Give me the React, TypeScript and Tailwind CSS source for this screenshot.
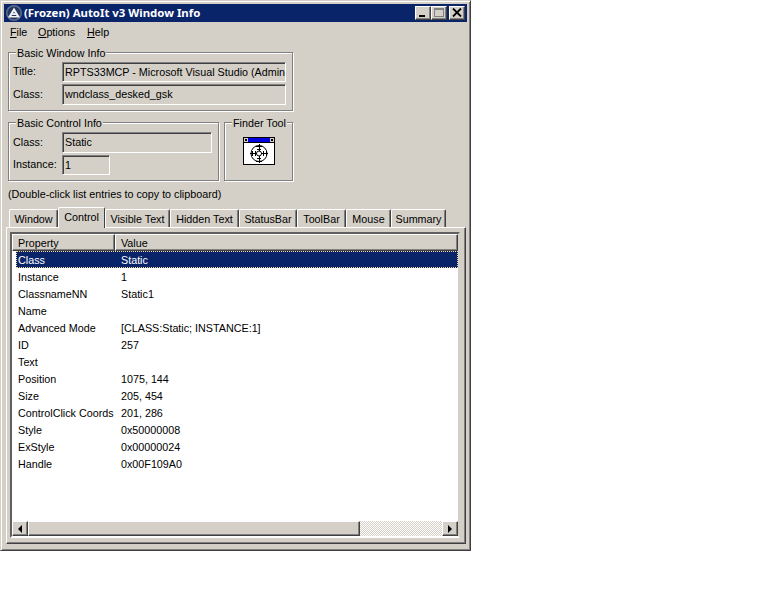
import React from "react";

const rows: [string, string][] = [
  ["Class", "Static"],
  ["Instance", "1"],
  ["ClassnameNN", "Static1"],
  ["Name", ""],
  ["Advanced Mode", "[CLASS:Static; INSTANCE:1]"],
  ["ID", "257"],
  ["Text", ""],
  ["Position", "1075, 144"],
  ["Size", "205, 454"],
  ["ControlClick Coords", "201, 286"],
  ["Style", "0x50000008"],
  ["ExStyle", "0x00000024"],
  ["Handle", "0x00F109A0"],
];

const tabs: [string, string][] = [
  ["Window", "w-[49px] ml-[3px]"],
  ["Control", "w-[47px]"],
  ["Visible Text", "w-[65px]"],
  ["Hidden Text", "w-[69px]"],
  ["StatusBar", "w-[58px]"],
  ["ToolBar", "w-[49px]"],
  ["Mouse", "w-[45px]"],
  ["Summary", "w-[55px]"],
];

const raised =
  "border border-t-white border-l-white border-r-[#404040] border-b-[#404040] shadow-[inset_-1px_-1px_0_#808080]";

function Field({ text, className }: { text: string; className: string }) {
  return (
    <div
      className={`flex items-center overflow-hidden whitespace-nowrap border border-t-[#808080] border-l-[#808080] border-r-white border-b-white pb-px pl-[2px] shadow-[inset_1px_1px_0_#404040] ${className}`}
    >
      {text}
    </div>
  );
}

function Group({ title, className, children }: { title: string; className: string; children?: React.ReactNode }) {
  return (
    <div
      className={`relative shrink-0 border border-[#808080] shadow-[inset_1px_1px_0_#fff,1px_1px_0_#fff] ${className}`}
    >
      <span className="absolute left-[7px] top-[-7px] bg-[#d4d0c8] px-px leading-[14px]">{title}</span>
      {children}
    </div>
  );
}

function Row({ label, children }: { label: string; children: React.ReactNode }) {
  return (
    <div className="flex items-center">
      <div className="w-[49px] pb-[2px]">{label}</div>
      {children}
    </div>
  );
}

function Logo() {
  return (
    <svg width="18" height="18" viewBox="0 0 18 18" className="shrink-0">
      <circle cx="9" cy="9" r="8" fill="#5d6f8e" />
      <circle cx="9" cy="9" r="6.5" fill="#26365c" />
      <path d="M9 3.5 L15 13.5 H3 Z" fill="#f2f4f8" />
      <path d="M9 7.5 L11.6 12 H6.4 Z" fill="#26365c" />
      <path d="M6.5 10.5 L9 8.8 L11.5 10.5 L10.5 11 H7.5 Z" fill="#f2f4f8" />
    </svg>
  );
}

function FinderIcon() {
  return (
    <svg width="32" height="28" viewBox="0 0 32 28" shapeRendering="crispEdges">
      <rect x="0.5" y="0.5" width="31" height="27" fill="#fff" stroke="#000" />
      <rect x="1" y="1" width="30" height="4" fill="#0000e0" />
      <rect x="1" y="1" width="4" height="4" fill="#d4d0c8" />
      <rect x="27" y="1" width="4" height="4" fill="#d4d0c8" />
      <rect x="2" y="2" width="2" height="2" fill="#000" />
      <rect x="28" y="2" width="2" height="2" fill="#000" />
      <rect x="0" y="5" width="32" height="1" fill="#000" />
      <circle cx="16" cy="16.5" r="8" fill="none" stroke="#000" strokeWidth="1" shapeRendering="auto" />
      <circle cx="16" cy="16.5" r="2.5" fill="none" stroke="#000" strokeWidth="1" shapeRendering="auto" />
      <path d="M16 7v7M16 19v7M7 16.5h7M18 16.5h7" stroke="#000" fill="none" />
      <path d="M13 9h6M13 24h6M9 14v5M23 14v5M14 12h4M14 21h4M12 14v5M20 14v5" stroke="#000" fill="none" />
    </svg>
  );
}

export default function App() {
  return (
    <div className="h-[614px] w-[768px] bg-white font-['Liberation_Sans',Arial,sans-serif] text-[10.75px] leading-[14px] text-black">
      <div className="h-[551px] w-[471px] border border-t-[#d4d0c8] border-l-[#d4d0c8] border-r-[#404040] border-b-[#404040] bg-[#d4d0c8] shadow-[inset_1px_1px_0_#fff,inset_-1px_-1px_0_#808080] p-[3px]">
        <div className="flex h-[18px] items-center bg-[#0a246a] pl-[1px] pr-[2px]">
          <Logo />
          <span className="ml-px whitespace-nowrap font-['Noto_Sans',sans-serif] text-[11.4px] font-bold text-white">(Frozen) AutoIt v3 Window Info</span>
          <div className="ml-auto flex items-center">
            <button className={`relative h-[14px] w-[16px] bg-[#d4d0c8] ${raised}`}>
              <span className="absolute bottom-[2px] left-[3px] h-[2px] w-[6px] bg-black" />
            </button>
            <button className={`flex h-[14px] w-[16px] items-center justify-center bg-[#d4d0c8] ${raised}`}>
              <span className="mr-px mb-px h-[9px] w-[10px] border border-t-2 border-[#808080]" />
            </button>
            <button className={`ml-[2px] flex h-[14px] w-[16px] items-center justify-center bg-[#d4d0c8] ${raised}`}>
              <svg width="10" height="9" viewBox="0 0 10 9" className="mr-px mb-px">
                <path d="M1 0.5 L9 8.5 M9 0.5 L1 8.5" stroke="#000" strokeWidth="1.8" fill="none" />
              </svg>
            </button>
          </div>
        </div>

        <div className="flex h-[20px] items-center whitespace-nowrap pb-px">
          <span className="ml-[6px] w-[28px]"><u>F</u>ile</span>
          <span className="w-[49px]"><u>O</u>ptions</span>
          <span><u>H</u>elp</span>
        </div>

        <Group title="Basic Window Info" className="ml-[4px] mt-[10px] h-[59px] w-[285px] pl-[4px] pt-[9px]">
          <div className="flex flex-col gap-[2px]">
            <Row label="Title:">
              <Field text="RPTS33MCP - Microsoft Visual Studio (Admini" className="h-[20px] w-[224px]" />
            </Row>
            <Row label="Class:">
              <Field text="wndclass_desked_gsk" className="h-[21px] w-[224px]" />
            </Row>
          </div>
        </Group>

        <div className="ml-[4px] mt-[11px] flex gap-[5px]">
          <Group title="Basic Control Info" className="h-[59px] w-[211px] pl-[4px] pt-[9px]">
            <div className="flex flex-col gap-[2px]">
              <Row label="Class:">
                <Field text="Static" className="h-[21px] w-[150px]" />
              </Row>
              <Row label="Instance:">
                <Field text="1" className="h-[20px] w-[48px]" />
              </Row>
            </div>
          </Group>
          <Group title="Finder Tool" className="flex h-[59px] w-[69px] justify-center pl-px pt-[14px]">
            <FinderIcon />
          </Group>
        </div>

        <div className="ml-[4px] mt-[6px] whitespace-nowrap">(Double-click list entries to copy to clipboard)</div>

        <div className="relative z-10 mt-[6px] flex h-[20px] items-end pl-[2px]">
          {tabs.map(([name, cls], i) => (
            <div
              key={name}
              className={
                i === 1
                  ? "-mb-[1px] flex h-[21px] w-[47px] items-start justify-center rounded-t-[2px] border-t border-l border-r border-t-white border-l-white border-r-[#404040] bg-[#d4d0c8] pt-[2px]"
                  : `flex h-[18px] items-center justify-center rounded-t-[2px] border-t border-l border-r border-t-white border-l-white border-r-[#404040] shadow-[inset_-1px_0_0_#808080] ${cls}`
              }
            >
              <span className="whitespace-nowrap">{name}</span>
            </div>
          ))}
        </div>

        <div className="ml-[2px] h-[317px] w-[460px] border border-t-white border-l-white border-r-[#404040] border-b-[#404040] shadow-[inset_-1px_-1px_0_#808080] pl-[3px] pt-[4px]">
          <div className="flex h-[306px] w-[450px] flex-col border-2 border-t-[#606060] border-l-[#606060] border-r-[#d4d0c8] border-b-white bg-white">
            <div className="flex h-[17px] shrink-0 bg-[#d4d0c8]">
              <div className={`flex w-[103px] items-center pl-[5px] ${raised} border-t-[#d4d0c8]`}>Property</div>
              <div className={`flex flex-1 items-center pl-[5px] ${raised} border-t-[#d4d0c8]`}>Value</div>
            </div>
            <div className="min-h-0 flex-1">
              {rows.map(([k, v], i) => (
                <div
                  key={k}
                  className={`ml-[4px] flex h-[17px] items-center pl-[2px] ${
                    i === 0
                      ? "border border-dotted border-[#f5db95] bg-[#0a246a] pl-px text-white"
                      : ""
                  }`}
                >
                  <span className="w-[103px] shrink-0 whitespace-nowrap">{k}</span>
                  <span className="whitespace-nowrap">{v}</span>
                </div>
              ))}
            </div>
            <div className="flex h-[15px] shrink-0 items-stretch bg-[#d4d0c8]">
              <button className={`flex w-[16px] shrink-0 items-center justify-center bg-[#d4d0c8] ${raised}`}>
                <span className="h-0 w-0 border-y-[4px] border-r-[4px] border-y-transparent border-r-black" />
              </button>
              <div className={`w-[332px] shrink-0 ${raised}`} />
              <div className="flex-1 bg-[repeating-conic-gradient(#ffffff_0_25%,#d4d0c8_0_50%)] bg-[length:2px_2px]" />
              <button className={`flex w-[16px] shrink-0 items-center justify-center bg-[#d4d0c8] ${raised}`}>
                <span className="h-0 w-0 border-y-[4px] border-l-[4px] border-y-transparent border-l-black" />
              </button>
            </div>
          </div>
        </div>
      </div>
    </div>
  );
}
